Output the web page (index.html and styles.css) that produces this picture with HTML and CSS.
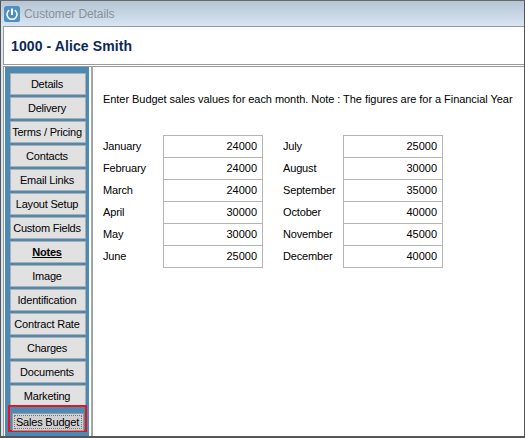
FILE: index.html
```html
<!DOCTYPE html>
<html lang="en">
<head>
<meta charset="utf-8">
<title>Customer Details</title>
<link rel="stylesheet" href="styles.css">
</head>
<body>
<div class="window">
  <div class="titlebar">
    <svg class="appicon" width="16" height="16" viewBox="0 0 16 16">
      <rect x="0" y="0" width="16" height="16" rx="2.5" fill="#4f8fbc"/>
      <path d="M5.2 4.2A5 5 0 1 0 10.8 4.2" fill="none" stroke="#fff" stroke-width="1.5"/>
      <path d="M8 2.5V9" fill="none" stroke="#fff" stroke-width="2"/>
    </svg>
    <span class="title">Customer Details</span>
  </div>
  <div class="client">
    <div class="header"><h1>1000 - Alice Smith</h1></div>
    <div class="main">
      <nav class="sidebar">
        <button class="btn">Details</button>
        <button class="btn">Delivery</button>
        <button class="btn">Terms / Pricing</button>
        <button class="btn">Contacts</button>
        <button class="btn">Email Links</button>
        <button class="btn">Layout Setup</button>
        <button class="btn">Custom Fields</button>
        <button class="btn notes">Notes</button>
        <button class="btn">Image</button>
        <button class="btn">Identification</button>
        <button class="btn">Contract Rate</button>
        <button class="btn">Charges</button>
        <button class="btn">Documents</button>
        <button class="btn">Marketing</button>
        <div class="highlight"><button class="btn active"><span class="focus">Sales Budget</span></button></div>
      </nav>
      <section class="content">
        <p class="note">Enter Budget sales values for each month. Note : The figures are for a Financial Year</p>
        <div class="months">
          <div class="col">
            <div class="row"><span class="label">January</span><span class="val">24000</span></div>
            <div class="row"><span class="label">February</span><span class="val">24000</span></div>
            <div class="row"><span class="label">March</span><span class="val">24000</span></div>
            <div class="row"><span class="label">April</span><span class="val">30000</span></div>
            <div class="row"><span class="label">May</span><span class="val">30000</span></div>
            <div class="row"><span class="label">June</span><span class="val">25000</span></div>
          </div>
          <div class="col">
            <div class="row"><span class="label">July</span><span class="val">25000</span></div>
            <div class="row"><span class="label">August</span><span class="val">30000</span></div>
            <div class="row"><span class="label">September</span><span class="val">35000</span></div>
            <div class="row"><span class="label">October</span><span class="val">40000</span></div>
            <div class="row"><span class="label">November</span><span class="val">45000</span></div>
            <div class="row"><span class="label">December</span><span class="val">40000</span></div>
          </div>
        </div>
      </section>
    </div>
  </div>
</div>
</body>
</html>
```
FILE: styles.css
```css
* { box-sizing: border-box; }
html, body { margin: 0; padding: 0; background: #fff; }
body { font-family: "Liberation Sans", Arial, sans-serif; font-size: 11px; color: #000; }
.window {
  width: 525px; height: 438px;
  display: flex; flex-direction: column;
  border: 1px solid #555;
  border-top-color: #6a6a6a;
  border-bottom-width: 2px;
  background: linear-gradient(#b6c5d4 0, #d9e6f3 26px, #d9e6f3 100%);
}
.titlebar {
  height: 25px; flex: none;
  display: flex; align-items: center;
  padding: 1px 0 0 3px; gap: 4px;
}
.appicon { flex: none; }
.title { font-size: 12px; color: #8a9199; letter-spacing: -0.1px; }
.client {
  flex: 1; min-height: 0;
  margin-left: 2px;
  background: #fff;
  display: flex; flex-direction: column;
}
.header {
  height: 39px; flex: none;
  border: 1px solid #9a9a9a; border-right: 0;
  display: flex; align-items: center;
  padding: 0 0 0 7px;
}
h1 { margin: 0; font-size: 14px; font-weight: bold; color: #0a2a5a; letter-spacing: 0.1px; }
.main { flex: 1; min-height: 0; display: flex; margin-top: 1px; border-top: 1px solid #9a9a9a; }
.sidebar {
  width: 90px; flex: none;
  border-left: 1px solid #9a9a9a;
  border-right: 2px solid #a5a5a5;
  padding: 0 1px 0 1px;
  position: relative;
  display: flex; flex-direction: column;
}
.sidebar::before {
  content: ""; position: absolute; inset: 0 2px 0 1px; background: #4a8ab4;
}
.btn {
  position: relative;
  width: 76px; height: 22px; flex: none;
  margin: 0 0 2px 5px; padding: 0 2px 0 0;
  border: 1px solid #adadad;
  background: #e1e1e1;
  font: 11px "Liberation Sans", Arial, sans-serif;
  letter-spacing: -0.2px;
  color: #000; text-align: center;
}
.sidebar .btn:first-child { margin-top: 6px; }
.notes { font-weight: bold; text-decoration: underline; }
.highlight {
  position: relative;
  width: 79px; height: 27px;
  margin: -4px 0 0 3px;
  border: 2px solid #e8141f;
  display: flex; align-items: center; justify-content: center;
}
.active { width: 72px; height: 18px; margin: 2px 0 0; padding: 0; background: #cfcfcf; border-color: #9a9a9a; }
.focus { display: block; margin: 1px; line-height: 14px; outline: 1px dotted #777; outline-offset: -1px; }
.content { flex: 1; min-width: 0; padding: 26px 0 0 10px; }
.note { margin: 0; line-height: 13px; white-space: nowrap; letter-spacing: -0.05px; }
.months { display: flex; gap: 20px; margin-top: 29px; }
.col { width: 160px; }
.row { display: flex; height: 22px; align-items: center; }
.label { width: 60px; letter-spacing: -0.15px; }
.val {
  width: 100px; height: 23px; margin-bottom: -1px;
  border: 1px solid #b4b4b4;
  background: #fff;
  text-align: right; line-height: 21px; padding-right: 5px;
}
```
